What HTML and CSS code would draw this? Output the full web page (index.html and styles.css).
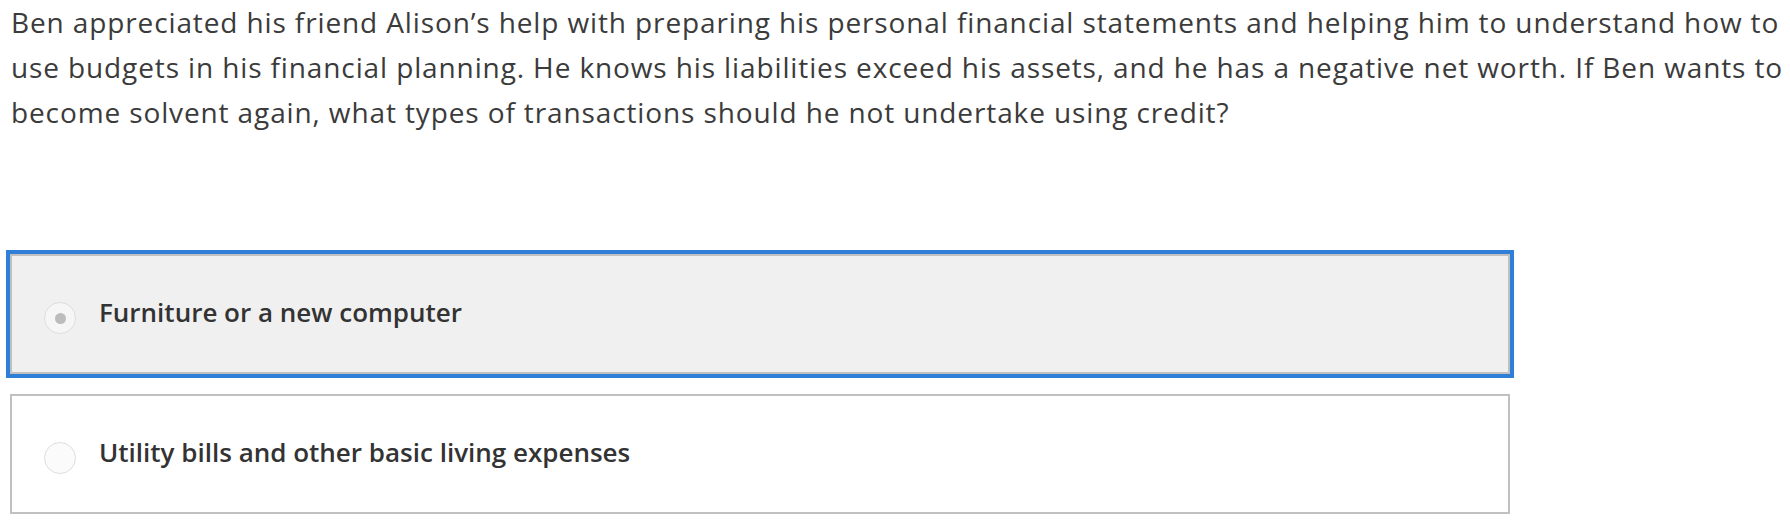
FILE: index.html
```html
<!DOCTYPE html>
<html lang="en">
<head>
<meta charset="utf-8">
<title>Question</title>
<link rel="stylesheet" href="styles.css">
</head>
<body>
<div class="page">
  <p class="question">Ben appreciated his friend Alison’s help with preparing his personal financial statements and helping him to understand how to use budgets in his financial planning. He knows his liabilities exceed his assets, and he has a negative net worth. If Ben wants to become solvent again, what types of transactions should he not undertake using credit?</p>
  <div class="options">
    <label class="option selected">
      <span class="radio"><span class="dot"></span></span>
      <span class="option-text">Furniture or a new computer</span>
    </label>
    <label class="option">
      <span class="radio"></span>
      <span class="option-text">Utility bills and other basic living expenses</span>
    </label>
  </div>
</div>
</body>
</html>
```

FILE: styles.css
```css
html, body {
  margin: 0;
  padding: 0;
  background: #ffffff;
}

.page {
  padding: 0 6px 0 10px;
  font-family: "Open Sans", "Noto Sans", sans-serif;
}

.question {
  margin: 0;
  font-size: 28px;
  letter-spacing: 0.88px;
  line-height: 44.8px;
  color: #3b3b3b;
  padding-left: 1px;
}

.options {
  margin-top: 120px;
  width: 1500px;
  display: flex;
  flex-direction: column;
  gap: 20px;
}

.option {
  box-sizing: border-box;
  height: 120px;
  border: 2px solid #c0c0c0;
  background: #ffffff;
  display: flex;
  align-items: flex-start;
  padding: 38px 0 0 32px;
  gap: 23px;
}

.option.selected {
  background: #f0f0f0;
  outline: 4px solid #2f7fd8;
}

.radio {
  box-sizing: border-box;
  width: 32px;
  height: 32px;
  margin-top: 8px;
  border-radius: 50%;
  border: 1px solid #dedede;
  background: #fbfbfb;
  display: flex;
  align-items: center;
  justify-content: center;
  flex: none;
}

.selected .radio {
  background: #f6f6f6;
}

.dot {
  width: 11px;
  height: 11px;
  border-radius: 50%;
  background: #bcbcbc;
}

.option-text {
  font-size: 26px;
  font-weight: 600;
  color: #333333;
  line-height: normal;
}
```
